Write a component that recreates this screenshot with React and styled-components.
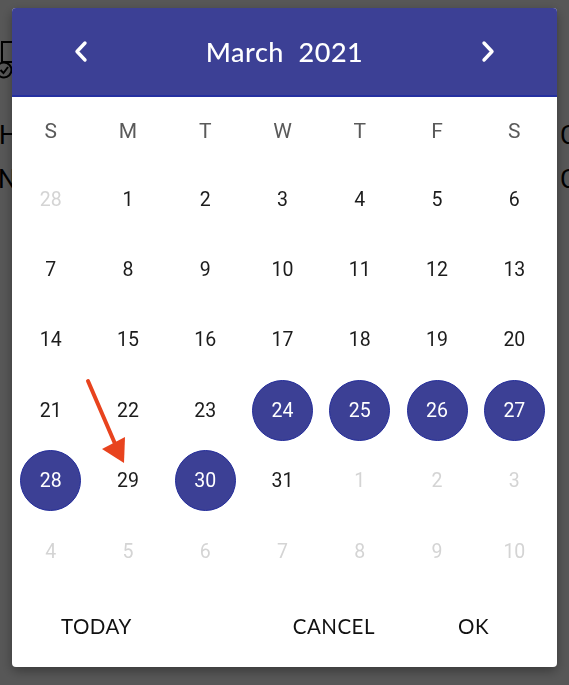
import React from "react";
import styled, { createGlobalStyle } from "styled-components";

const Global = createGlobalStyle`
  html, body { margin: 0; padding: 0; background: #ffffff; }
  body { font-family: "Roboto", "Liberation Sans", sans-serif; overflow: hidden; }
`;

const Page = styled.div`
  width: 569px;
  height: 685px;
  position: relative;
  background: #ffffff;
  padding-top: 40px;
  box-sizing: border-box;
  overflow: hidden;
`;

const PageIcon = styled.svg`
  display: block;
  margin-left: -10px;
  width: 30px;
  height: 40px;
`;

const PageRow = styled.div`
  display: flex;
  justify-content: space-between;
  margin-top: ${(p) => p.$top}px;
  font-family: "Roboto", "Liberation Sans", sans-serif;
  font-size: 26px;
  line-height: 30px;
  color: #000;
`;

const PageCell = styled.span`
  margin: 0 ${(p) => p.$right || 0}px 0 ${(p) => p.$left || 0}px;
`;

const Backdrop = styled.div`
  position: fixed;
  inset: 0;
  background: rgba(0, 0, 0, 0.66);
  display: flex;
  align-items: flex-start;
  padding: 8px 12px;
`;

const Dialog = styled.div`
  width: 545px;
  height: 659px;
  background: #ffffff;
  border-radius: 4px;
  overflow: hidden;
  display: flex;
  flex-direction: column;
  box-shadow: 0 4px 12px rgba(0, 0, 0, 0.35);
`;

const Header = styled.div`
  height: 87px;
  flex: none;
  background: #3c4095;
  border-bottom: 2px solid #2530a0;
  display: flex;
  align-items: center;
  justify-content: space-between;
  padding: 0 60px;
  color: #ffffff;
`;

const NavButton = styled.button`
  border: 0;
  background: none;
  padding: 0;
  width: 20px;
  height: 24px;
  display: flex;
  align-items: center;
  justify-content: center;
  cursor: pointer;
`;

const Title = styled.div`
  font-family: "Lato", "Liberation Sans", sans-serif;
  font-size: 27px;
  font-weight: 500;
  letter-spacing: 0.5px;
  white-space: pre;
`;

const Body = styled.div`
  position: relative;
  flex: none;
  display: flex;
  flex-direction: column;
`;

const Grid = styled.div`
  display: grid;
  grid-template-columns: repeat(7, 1fr);
  padding-right: 4px;
`;

const WeekLabel = styled.div`
  height: 67px;
  display: flex;
  align-items: center;
  justify-content: center;
  font-size: 21px;
  color: #5a5a5a;
`;

const DayCell = styled.div`
  height: 70.4px;
  display: flex;
  align-items: center;
  justify-content: center;
`;

const Day = styled.div`
  width: 61px;
  height: 61px;
  box-sizing: border-box;
  border-radius: 50%;
  display: flex;
  align-items: center;
  justify-content: center;
  font-size: 19.5px;
  color: ${(p) => (p.$selected ? "#ffffff" : p.$muted ? "#d4d4d4" : "#1c1c1c")};
  background: ${(p) => (p.$selected ? "#3c4095" : "transparent")};
  border: 1px solid ${(p) => (p.$selected ? "#232c9a" : "transparent")};
`;

const Actions = styled.div`
  flex: 1;
  display: flex;
  align-items: center;
  padding: 0 60px 2px 41px;
`;

const ActionButton = styled.button`
  border: 0;
  background: none;
  padding: 6px 8px;
  font-family: "Lato", "Liberation Sans", sans-serif;
  font-size: 20.5px;
  font-weight: 400;
  letter-spacing: 0.5px;
  color: #111;
  text-transform: uppercase;
  cursor: pointer;
  margin-right: ${(p) => p.$gap || 0}px;
  ${(p) => p.$push && "margin-right: auto;"}
`;

const Pointer = styled.svg`
  position: absolute;
  left: 70px;
  top: 272px;
  width: 70px;
  height: 110px;
  pointer-events: none;
`;

const WEEKDAYS = ["S", "M", "T", "W", "T", "F", "S"];

const WEEKS = [
  [[28, "m"], 1, 2, 3, 4, 5, 6],
  [7, 8, 9, 10, 11, 12, 13],
  [14, 15, 16, 17, 18, 19, 20],
  [21, 22, 23, [24, "s"], [25, "s"], [26, "s"], [27, "s"]],
  [[28, "s"], 29, [30, "s"], 31, [1, "m"], [2, "m"], [3, "m"]],
  [[4, "m"], [5, "m"], [6, "m"], [7, "m"], [8, "m"], [9, "m"], [10, "m"]],
];

function Chevron({ dir }) {
  const pts = dir === "left" ? "13,3 5,11.5 13,20" : "7,3 15,11.5 7,20";
  return (
    <svg width="20" height="24" viewBox="0 0 20 24">
      <polyline
        points={pts}
        fill="none"
        stroke="#ffffff"
        strokeWidth="3.4"
        strokeLinecap="round"
        strokeLinejoin="round"
      />
    </svg>
  );
}

export default function App() {
  return (
    <>
      <Global />
      <Page>
        <PageIcon viewBox="0 0 30 40">
          <rect x="12" y="2" width="16" height="20" fill="none" stroke="#000" strokeWidth="2" />
          <circle cx="14" cy="30" r="7.5" fill="#fff" stroke="#000" strokeWidth="2" />
          <polyline points="10.5,30 13.5,33 18,27" fill="none" stroke="#000" strokeWidth="2" />
        </PageIcon>
        <PageRow $top={40}>
          <PageCell $left={-1}>H</PageCell>
          <PageCell $right={-8}>C</PageCell>
        </PageRow>
        <PageRow $top={14}>
          <PageCell $left={-2}>N</PageCell>
          <PageCell $right={-8}>C</PageCell>
        </PageRow>

        <Backdrop>
          <Dialog role="dialog">
            <Header>
              <NavButton aria-label="Previous month">
                <Chevron dir="left" />
              </NavButton>
              <Title>{"March  2021"}</Title>
              <NavButton aria-label="Next month">
                <Chevron dir="right" />
              </NavButton>
            </Header>
            <Body>
              <Grid>
                {WEEKDAYS.map((d, i) => (
                  <WeekLabel key={i}>{d}</WeekLabel>
                ))}
                {WEEKS.flat().map((entry, i) => {
                  const [n, flag] = Array.isArray(entry) ? entry : [entry];
                  return (
                    <DayCell key={i}>
                      <Day $selected={flag === "s"} $muted={flag === "m"}>
                        {n}
                      </Day>
                    </DayCell>
                  );
                })}
              </Grid>
              <Pointer viewBox="0 0 70 110">
                <line x1="6" y1="12" x2="34" y2="77" stroke="#e8431e" strokeWidth="4" strokeLinecap="round" />
                <polygon points="42,94 20,80 43,68" fill="#e8431e" />
              </Pointer>
            </Body>
            <Actions>
              <ActionButton $push>Today</ActionButton>
              <ActionButton $gap={67}>Cancel</ActionButton>
              <ActionButton>OK</ActionButton>
            </Actions>
          </Dialog>
        </Backdrop>
      </Page>
    </>
  );
}
